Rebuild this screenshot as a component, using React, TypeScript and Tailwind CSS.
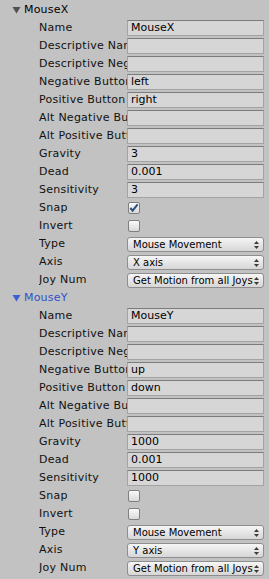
import React from "react";

type Row =
  | { kind: "text"; label: string; value: string }
  | { kind: "check"; label: string; checked: boolean }
  | { kind: "select"; label: string; value: string };

const Tri = ({ color }: { color: string }) => (
  <svg width="9" height="8" viewBox="0 0 9 8" className="shrink-0">
    <polygon points="0.5,1 8.5,1 4.5,7.5" fill={color} />
  </svg>
);

const Arrows = () => (
  <svg width="5" height="8" viewBox="0 0 5 8" className="shrink-0">
    <polygon points="2.5,0 5,3 0,3" fill="#3a3a3a" />
    <polygon points="0,5 5,5 2.5,8" fill="#3a3a3a" />
  </svg>
);

function Field({ row }: { row: Row }) {
  if (row.kind === "text") {
    return (
      <div className="h-[16px] w-[137px] bg-[#d6d6d6] border border-[#a3a3a3] border-t-[#7c7c7c] pl-[3px] text-[11px] leading-[14px] text-black overflow-hidden whitespace-nowrap">
        {row.value}
      </div>
    );
  }
  if (row.kind === "check") {
    return (
      <div className="w-[137px] h-[16px] flex items-center pl-[1px]">
        <div className="w-[12px] h-[12px] rounded-[2px] border border-[#7f7f7f] bg-gradient-to-b from-[#fafafa] to-[#d9d9d9] flex items-center justify-center">
          {row.checked && (
            <svg width="11" height="10" viewBox="0 0 11 10">
              <path d="M1.5 5 L4 8 L9.5 1" stroke="#2d4f80" strokeWidth="2.2" fill="none" />
            </svg>
          )}
        </div>
      </div>
    );
  }
  return (
    <div className="relative h-[15px] w-[137px] rounded-[3px] border border-[#8e8e8e] bg-gradient-to-b from-[#f6f6f6] to-[#d6d6d6] pl-[5px] text-[10px] leading-[13px] text-black">
      <div className="w-[120px] overflow-hidden whitespace-nowrap">{row.value}</div>
      <div className="absolute right-[4px] top-[3px]">
        <Arrows />
      </div>
    </div>
  );
}

function Section({
  name,
  selected,
  rows,
}: {
  name: string;
  selected?: boolean;
  rows: Row[];
}) {
  return (
    <div className="flex flex-col gap-[2px]">
      <div className="h-[16px] flex items-center pl-[12px]">
        <Tri color={selected ? "#3b5fd4" : "#505050"} />
        <span
          className={`ml-[3px] text-[11px] leading-[16px] tracking-[0.2px] ${
            selected ? "text-[#2f52c9]" : "text-black"
          }`}
        >
          {name}
        </span>
      </div>
      {rows.map((r, i) => (
        <div key={i} className="h-[16px] flex items-center">
          <div className="w-[127px] pl-[39px] text-[11px] leading-[16px] tracking-[0.25px] text-[#111] overflow-hidden whitespace-nowrap">
            <div className="w-[88px] overflow-hidden">{r.label}</div>
          </div>
          <Field row={r} />
        </div>
      ))}
    </div>
  );
}

const makeRows = (
  name: string,
  neg: string,
  pos: string,
  gravity: string,
  sens: string,
  snap: boolean,
  axis: string
): Row[] => [
  { kind: "text", label: "Name", value: name },
  { kind: "text", label: "Descriptive Name", value: "" },
  { kind: "text", label: "Descriptive Negative Name", value: "" },
  { kind: "text", label: "Negative Button", value: neg },
  { kind: "text", label: "Positive Button", value: pos },
  { kind: "text", label: "Alt Negative Button", value: "" },
  { kind: "text", label: "Alt Positive Button", value: "" },
  { kind: "text", label: "Gravity", value: gravity },
  { kind: "text", label: "Dead", value: "0.001" },
  { kind: "text", label: "Sensitivity", value: sens },
  { kind: "check", label: "Snap", checked: snap },
  { kind: "check", label: "Invert", checked: false },
  { kind: "select", label: "Type", value: "Mouse Movement" },
  { kind: "select", label: "Axis", value: axis },
  { kind: "select", label: "Joy Num", value: "Get Motion from all Joysticks" },
];

export default function App() {
  return (
    <div
      className="w-[269px] h-[579px] bg-[#c2c2c2] pt-[2px] flex flex-col gap-[2px] overflow-hidden"
      style={{ fontFamily: '"DejaVu Sans", Verdana, sans-serif' }}
    >
      <Section
        name="MouseX"
        rows={makeRows("MouseX", "left", "right", "3", "3", true, "X axis")}
      />
      <Section
        name="MouseY"
        selected
        rows={makeRows("MouseY", "up", "down", "1000", "1000", false, "Y axis")}
      />
    </div>
  );
}
